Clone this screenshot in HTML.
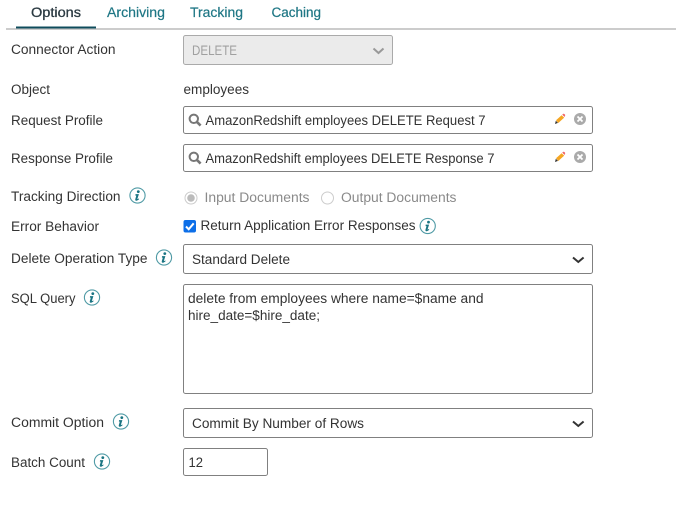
<!DOCTYPE html>
<html>
<head>
<meta charset="utf-8">
<title>Options</title>
<style>
html,body{margin:0;padding:0;background:#fff;width:676px;height:532px;overflow:hidden}
svg{display:block}
text{font-family:"Liberation Sans",sans-serif;font-size:13.4px;fill:#333;white-space:pre}
.t{fill:#1f7785;stroke:#1f7785;stroke-width:.2}
.g{fill:#8a8a8a}
</style>
</head>
<body>
<svg width="676" height="532" viewBox="0 0 676 532" xmlns="http://www.w3.org/2000/svg">
<defs>
<g id="i">
<circle r="7.6" fill="#fff" stroke="#4f9aa5" stroke-width="1.1"/>
<circle cx="0.8" cy="-3.9" r="1.4" fill="#1a7482"/>
<path d="M-2-1.4H1.4L-.1 3.2Q-.2 3.8.5 3.4L1.4 2.9V4L-.5 5.1Q-2.6 5.6-2.2 3.6L-1.2 .1H-2.1Z" fill="#1a7482"/>
</g>
<g id="p">
<path d="M-5 5L-4.2 1.8L-2 3.9Z" fill="#333"/>
<path d="M-4 1.3L1.6-3.8L4.2-1.4L-1.7 4Z" fill="#f5a623"/>
<path d="M2.2-4.4L3.3-5.2Q3.9-5.4 4.4-5L5.1-4.2Q5.4-3.6 5-3.1L4.6-2Z" fill="#f0686a"/>
</g>
<g id="x">
<circle r="6" fill="#aaa"/>
<path d="M-2.5-2.5L2.5 2.5M2.5-2.5L-2.5 2.5" stroke="#fff" stroke-width="1.8"/>
</g>
<g id="m" fill="none" stroke="#777">
<circle cx="-1.2" cy="-1.2" r="4.2" stroke-width="2"/>
<path d="M1.8 1.8L5.6 5.6" stroke-width="2.6"/>
</g>
</defs>

<!-- tabs -->
<text x="31" y="17" textLength="50" lengthAdjust="spacingAndGlyphs" style="fill:#2b3a42;stroke:#2b3a42;stroke-width:.3">Options</text>
<text class="t" x="107" y="17" textLength="58" lengthAdjust="spacingAndGlyphs">Archiving</text>
<text class="t" x="190" y="17" textLength="53" lengthAdjust="spacingAndGlyphs">Tracking</text>
<text class="t" x="271.500" y="17" textLength="49.500" lengthAdjust="spacingAndGlyphs">Caching</text>
<rect x="6" y="28" width="670" height="2" fill="#ccc"/>
<rect x="16" y="26.500" width="80" height="2" fill="#0f4c5c"/>

<!-- connector action -->
<text x="11" y="54" textLength="104.500" lengthAdjust="spacingAndGlyphs">Connector Action</text>
<rect x="183.500" y="35.500" width="209" height="29" rx="2" fill="#ebebeb" stroke="#aaa"/>
<text x="192" y="55" textLength="45" lengthAdjust="spacingAndGlyphs" style="fill:#a0a0a0">DELETE</text>
<path d="M373.500 48.500L378.500 53L383.500 48.500" fill="none" stroke="#999" stroke-width="2"/>

<!-- object -->
<text x="11" y="94" textLength="39" lengthAdjust="spacingAndGlyphs">Object</text>
<text x="183.500" y="94" textLength="65.500" lengthAdjust="spacingAndGlyphs">employees</text>

<!-- request -->
<text x="11" y="125" textLength="92" lengthAdjust="spacingAndGlyphs">Request Profile</text>
<rect x="183.500" y="106.500" width="409" height="27" rx="2" fill="#fff" stroke="#808080"/>
<use href="#m" x="195" y="120"/>
<text x="205.500" y="125" textLength="280" lengthAdjust="spacingAndGlyphs">AmazonRedshift employees DELETE Request 7</text>
<use href="#p" x="560" y="119"/>
<use href="#x" x="580" y="119"/>

<!-- response -->
<text x="11" y="163" textLength="102" lengthAdjust="spacingAndGlyphs">Response Profile</text>
<rect x="183.500" y="144.500" width="409" height="27" rx="2" fill="#fff" stroke="#808080"/>
<use href="#m" x="195" y="158"/>
<text x="205.500" y="163" textLength="289" lengthAdjust="spacingAndGlyphs">AmazonRedshift employees DELETE Response 7</text>
<use href="#p" x="560" y="157"/>
<use href="#x" x="580" y="157"/>

<!-- tracking -->
<text x="11" y="201" textLength="109.500" lengthAdjust="spacingAndGlyphs">Tracking Direction</text>
<use href="#i" x="137.500" y="195.500"/>
<circle cx="191" cy="198" r="6" fill="#fff" stroke="#ccc"/>
<circle cx="191" cy="198" r="3.800" fill="#bbb"/>
<text class="g" x="204.500" y="202" textLength="105" lengthAdjust="spacingAndGlyphs">Input Documents</text>
<circle cx="327.500" cy="198" r="6" fill="#fff" stroke="#ccc"/>
<text class="g" x="341" y="202" textLength="115.500" lengthAdjust="spacingAndGlyphs">Output Documents</text>

<!-- error -->
<text x="11" y="231" textLength="88" lengthAdjust="spacingAndGlyphs">Error Behavior</text>
<rect x="183.500" y="220" width="12.500" height="12.500" rx="2" fill="#0d6fe8"/>
<path d="M186 226.500L188.700 229.300L193.700 223.300" fill="none" stroke="#fff" stroke-width="2"/>
<text x="200.500" y="230" textLength="215" lengthAdjust="spacingAndGlyphs">Return Application Error Responses</text>
<use href="#i" x="427.700" y="226"/>

<!-- delete op -->
<text x="11" y="263" textLength="136.500" lengthAdjust="spacingAndGlyphs">Delete Operation Type</text>
<use href="#i" x="164" y="257.500"/>
<rect x="183.500" y="244.500" width="409" height="29" rx="2" fill="#fff" stroke="#808080"/>
<text x="192" y="264" textLength="98" lengthAdjust="spacingAndGlyphs">Standard Delete</text>
<path d="M573 257.500L578.300 262L583.600 257.500" fill="none" stroke="#333" stroke-width="2"/>

<!-- sql -->
<text x="11" y="303" textLength="64.500" lengthAdjust="spacingAndGlyphs">SQL Query</text>
<use href="#i" x="92" y="297.500"/>
<rect x="183.500" y="284.500" width="409" height="109" rx="2" fill="#fff" stroke="#808080"/>
<text x="188" y="303" textLength="295.500" lengthAdjust="spacingAndGlyphs">delete from employees where name=$name and</text>
<text x="188" y="320" textLength="132" lengthAdjust="spacingAndGlyphs">hire_date=$hire_date;</text>

<!-- commit -->
<text x="11" y="427" textLength="93" lengthAdjust="spacingAndGlyphs">Commit Option</text>
<use href="#i" x="121" y="421.500"/>
<rect x="183.500" y="408.500" width="409" height="29" rx="2" fill="#fff" stroke="#808080"/>
<text x="192" y="428" textLength="172" lengthAdjust="spacingAndGlyphs">Commit By Number of Rows</text>
<path d="M573 421.500L578.300 426L583.600 421.500" fill="none" stroke="#333" stroke-width="2"/>

<!-- batch -->
<text x="11" y="467" textLength="74" lengthAdjust="spacingAndGlyphs">Batch Count</text>
<use href="#i" x="102" y="461.500"/>
<rect x="183.500" y="448.500" width="84" height="27" rx="2" fill="#fff" stroke="#808080"/>
<text x="188.500" y="467" textLength="14.500" lengthAdjust="spacingAndGlyphs">12</text>
</svg>
</body>
</html>
